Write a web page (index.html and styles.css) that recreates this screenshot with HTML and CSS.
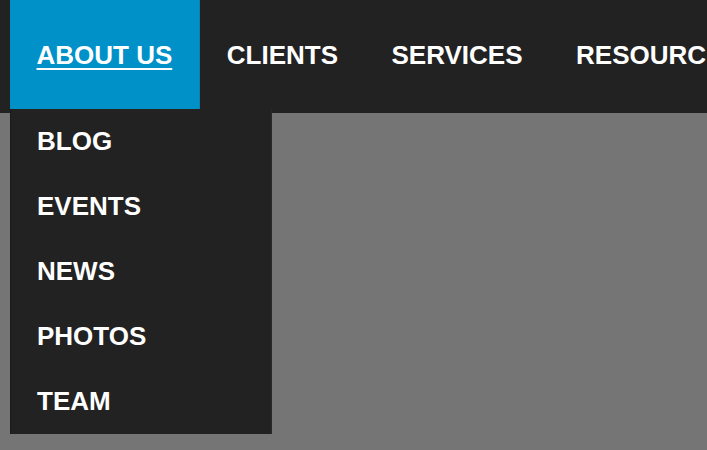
FILE: index.html
```html
<!DOCTYPE html>
<html lang="en">
<head>
    <meta charset="UTF-8">
    <meta name="viewport" content="width=device-width, initial-scale=1.0">
    <title>Menu</title>
    <link rel="stylesheet" href="styles.css">
</head>
<body>
    <nav class="navbar">
        <ul class="menu">
            <li class="menu-item active">
                <a href="#about">About us</a>
                <ul class="submenu">
                    <li><a href="#blog">Blog</a></li>
                    <li><a href="#events">Events</a></li>
                    <li><a href="#news">News</a></li>
                    <li><a href="#photos">Photos</a></li>
                    <li><a href="#team">Team</a></li>
                </ul>
            </li>
            <li class="menu-item"><a href="#clients">Clients</a></li>
            <li class="menu-item"><a href="#services">Services</a></li>
            <li class="menu-item"><a href="#resources">Resources</a></li>
        </ul>
    </nav>
</body>
</html>
```

FILE: styles.css
```css
* {
    margin: 0;
    padding: 0;
    box-sizing: border-box;
}

html {
    overflow: hidden;
}

body {
    background-color: #757575;
    font-family: "Liberation Sans", Arial, sans-serif;
    min-height: 100vh;
}

.navbar {
    background-color: #222;
    height: 113px;
    padding-left: 10px;
}

.menu {
    list-style: none;
    display: flex;
    white-space: nowrap;
}

.menu-item {
    position: relative;
    height: 110px;
}

.menu-item > a {
    display: block;
    height: 110px;
    line-height: 110px;
    padding: 0 27px 0 26.5px;
    color: white;
    text-decoration: none;
    text-transform: uppercase;
    font-weight: bold;
    font-size: 26px;
}

.menu-item.active > a {
    background-color: #0091c9;
    text-decoration: underline;
    text-underline-offset: 4px;
    text-decoration-thickness: 2px;
    border-right: 1px solid #0a80b0;
    border-bottom: 1px solid #0a80b0;
}

/* desplegable de "about us" */
.submenu {
    list-style: none;
    position: absolute;
    z-index: 10;
    top: 109px;
    left: 0;
    width: 262px;
    background-color: #222;
    border-left: 1px solid #1a1a1a;
    border-right: 1px solid #2a2a2a;
}

.submenu a {
    display: block;
    height: 65px;
    line-height: 65px;
    padding-left: 26px;
    color: white;
    text-decoration: none;
    text-transform: uppercase;
    font-weight: bold;
    font-size: 26px;
}
```
